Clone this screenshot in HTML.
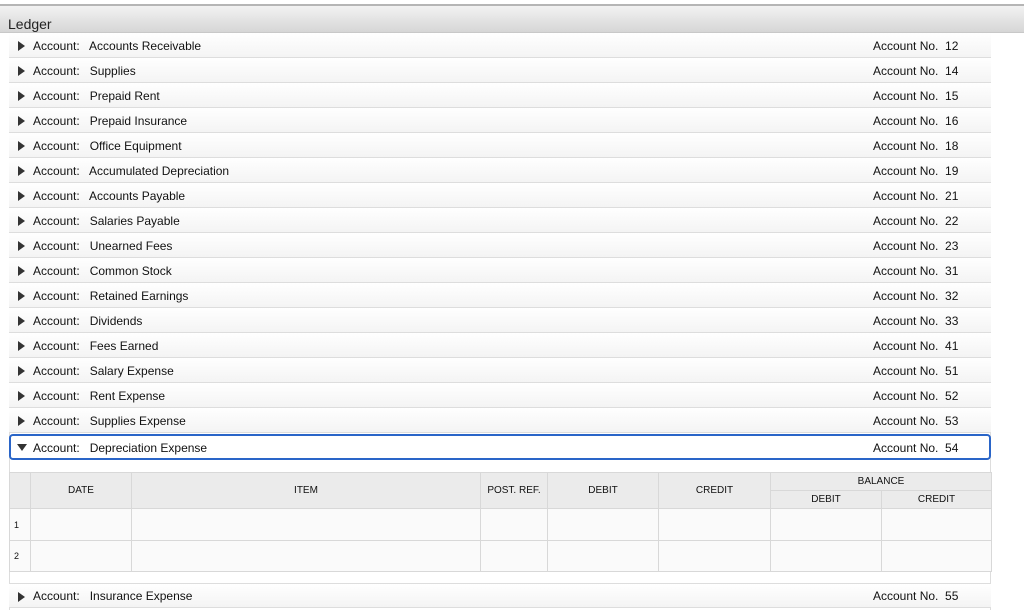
<!DOCTYPE html>
<html><head><style>
body{margin:0;width:1024px;height:610px;background:#fff;font-family:"Liberation Sans",sans-serif;position:relative;overflow:hidden;color:#111}
.top{position:absolute;left:0;top:4px;width:1024px;height:2px;background:#b5b5b5}
.hdr{position:absolute;left:0;top:6px;width:1024px;height:27px;background:linear-gradient(#f2f2f2,#d6d6d6);border-bottom:1px solid #c8c8c8;box-sizing:border-box}
.hdr span{position:absolute;left:8px;top:10px;font-size:14px;color:#222}
.wrap{position:absolute;left:9px;top:33px;width:982px;height:577px;border-left:1px solid #ddd;border-right:1px solid #ddd;box-sizing:border-box}
.row{position:absolute;left:9px;width:982px;height:25px;background:linear-gradient(#fff,#f4f4f4);border-bottom:1px solid #ddd;box-sizing:border-box;font-size:12px}
.row .t{position:absolute;left:24px;top:6px}
.row .n{position:absolute;left:864px;top:6px}
.tri{position:absolute;left:9px;top:8px;width:0;height:0;border-top:5px solid transparent;border-bottom:5px solid transparent;border-left:7px solid #333}
.sel{border:2px solid #2a65c8;border-radius:4px;background:#fff}
.sel .tri{border-left:5px solid transparent;border-right:5px solid transparent;border-top:7px solid #333;border-bottom:0;top:8px;left:6px}
.sel .t{left:22px;top:5px}.sel .n{left:862px;top:5px}
table{position:absolute;left:9px;top:472px;border-collapse:collapse;font-size:10px;table-layout:fixed}
td{border:1px solid #d8d8d8;padding:0;text-align:center;background:#fafafa}
td.h{background:#ebebeb}
</style></head><body>
<div class="top"></div>
<div class="hdr"><span>Ledger</span></div>
<div class="wrap"></div>
<div class="row" style="top:33px"><div class="tri"></div><span class="t">Account:&nbsp;&nbsp; Accounts Receivable</span><span class="n">Account No.&nbsp; 12</span></div>
<div class="row" style="top:58px"><div class="tri"></div><span class="t">Account:&nbsp;&nbsp; Supplies</span><span class="n">Account No.&nbsp; 14</span></div>
<div class="row" style="top:83px"><div class="tri"></div><span class="t">Account:&nbsp;&nbsp; Prepaid Rent</span><span class="n">Account No.&nbsp; 15</span></div>
<div class="row" style="top:108px"><div class="tri"></div><span class="t">Account:&nbsp;&nbsp; Prepaid Insurance</span><span class="n">Account No.&nbsp; 16</span></div>
<div class="row" style="top:133px"><div class="tri"></div><span class="t">Account:&nbsp;&nbsp; Office Equipment</span><span class="n">Account No.&nbsp; 18</span></div>
<div class="row" style="top:158px"><div class="tri"></div><span class="t">Account:&nbsp;&nbsp; Accumulated Depreciation</span><span class="n">Account No.&nbsp; 19</span></div>
<div class="row" style="top:183px"><div class="tri"></div><span class="t">Account:&nbsp;&nbsp; Accounts Payable</span><span class="n">Account No.&nbsp; 21</span></div>
<div class="row" style="top:208px"><div class="tri"></div><span class="t">Account:&nbsp;&nbsp; Salaries Payable</span><span class="n">Account No.&nbsp; 22</span></div>
<div class="row" style="top:233px"><div class="tri"></div><span class="t">Account:&nbsp;&nbsp; Unearned Fees</span><span class="n">Account No.&nbsp; 23</span></div>
<div class="row" style="top:258px"><div class="tri"></div><span class="t">Account:&nbsp;&nbsp; Common Stock</span><span class="n">Account No.&nbsp; 31</span></div>
<div class="row" style="top:283px"><div class="tri"></div><span class="t">Account:&nbsp;&nbsp; Retained Earnings</span><span class="n">Account No.&nbsp; 32</span></div>
<div class="row" style="top:308px"><div class="tri"></div><span class="t">Account:&nbsp;&nbsp; Dividends</span><span class="n">Account No.&nbsp; 33</span></div>
<div class="row" style="top:333px"><div class="tri"></div><span class="t">Account:&nbsp;&nbsp; Fees Earned</span><span class="n">Account No.&nbsp; 41</span></div>
<div class="row" style="top:358px"><div class="tri"></div><span class="t">Account:&nbsp;&nbsp; Salary Expense</span><span class="n">Account No.&nbsp; 51</span></div>
<div class="row" style="top:383px"><div class="tri"></div><span class="t">Account:&nbsp;&nbsp; Rent Expense</span><span class="n">Account No.&nbsp; 52</span></div>
<div class="row" style="top:408px"><div class="tri"></div><span class="t">Account:&nbsp;&nbsp; Supplies Expense</span><span class="n">Account No.&nbsp; 53</span></div>
<div class="row sel" style="top:434px;height:26px"><div class="tri"></div><span class="t">Account:&nbsp;&nbsp; Depreciation Expense</span><span class="n">Account No.&nbsp; 54</span></div>
<table>
<colgroup><col style="width:21px"><col style="width:101px"><col style="width:349px"><col style="width:67px"><col style="width:111px"><col style="width:112px"><col style="width:111px"><col style="width:110px"></colgroup>
<tr style="height:18px"><td class="h" rowspan="2"></td><td class="h" rowspan="2">DATE</td><td class="h" rowspan="2">ITEM</td><td class="h" rowspan="2">POST. REF.</td><td class="h" rowspan="2">DEBIT</td><td class="h" rowspan="2">CREDIT</td><td class="h" colspan="2">BALANCE</td></tr>
<tr style="height:18px"><td class="h">DEBIT</td><td class="h">CREDIT</td></tr>
<tr style="height:32px"><td style="text-align:left;padding-left:4px;font-size:9px">1</td><td></td><td></td><td></td><td></td><td></td><td></td><td></td></tr>
<tr style="height:31px"><td style="text-align:left;padding-left:4px;font-size:9px">2</td><td></td><td></td><td></td><td></td><td></td><td></td><td></td></tr>
</table>
<div class="row" style="top:583px;border-top:1px solid #ddd"><div class="tri"></div><span class="t" style="top:5px">Account:&nbsp;&nbsp; Insurance Expense</span><span class="n" style="top:5px">Account No.&nbsp; 55</span></div>
</body></html>
